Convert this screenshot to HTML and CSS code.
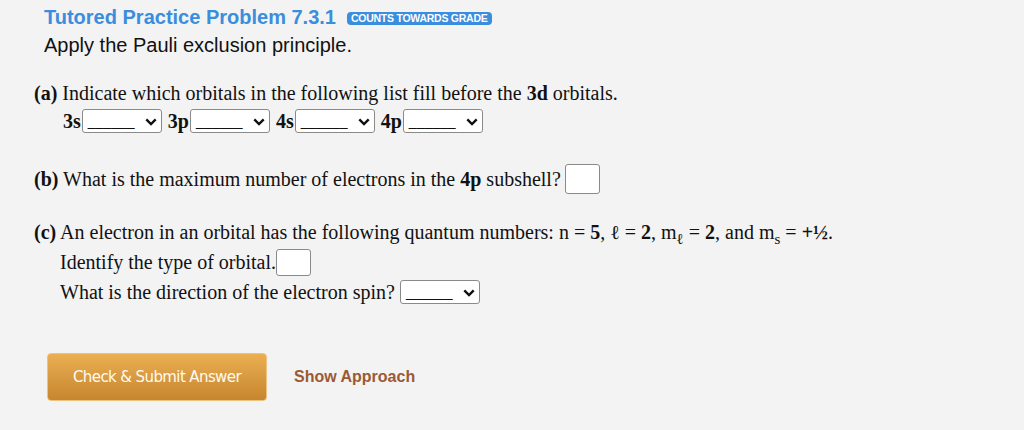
FILE: index.html
```html
<!DOCTYPE html>
<html lang="en">
<head>
<meta charset="utf-8">
<title>Tutored Practice Problem 7.3.1</title>
<link rel="stylesheet" href="styles.css">
</head>
<body>
<div class="page">
  <header class="head">
    <h1 class="title">Tutored Practice Problem 7.3.1 <span class="badge">COUNTS TOWARDS GRADE</span></h1>
    <p class="subtitle">Apply the Pauli exclusion principle.</p>
  </header>

  <section class="part part-a">
    <p class="q"><b>(a)</b> Indicate which orbitals in the following list fill before the <b>3d</b> orbitals.</p>
    <div class="sel-row">
      <b>3s</b><span class="select">______<svg class="chev" viewBox="0 0 12 8" width="12" height="8"><path d="M1.3 1.3 L6 6 L10.7 1.3" fill="none" stroke="#111" stroke-width="2.4"/></svg></span>
      <b>3p</b><span class="select">______<svg class="chev" viewBox="0 0 12 8" width="12" height="8"><path d="M1.3 1.3 L6 6 L10.7 1.3" fill="none" stroke="#111" stroke-width="2.4"/></svg></span>
      <b>4s</b><span class="select">______<svg class="chev" viewBox="0 0 12 8" width="12" height="8"><path d="M1.3 1.3 L6 6 L10.7 1.3" fill="none" stroke="#111" stroke-width="2.4"/></svg></span>
      <b>4p</b><span class="select">______<svg class="chev" viewBox="0 0 12 8" width="12" height="8"><path d="M1.3 1.3 L6 6 L10.7 1.3" fill="none" stroke="#111" stroke-width="2.4"/></svg></span>
    </div>
  </section>

  <section class="part part-b">
    <p class="q line"><span><b>(b)</b> What is the maximum number of electrons in the <b>4p</b> subshell?</span><span class="box box-b"></span></p>
  </section>

  <section class="part part-c">
    <p class="q"><b>(c)</b> An electron in an orbital has the following quantum numbers: n = <b>5</b>, ℓ = <b>2</b>, m<sub>ℓ</sub> = <b>2</b>, and m<sub>s</sub> = <b>+½</b>.</p>
    <p class="sub line"><span>Identify the type of orbital.</span><span class="box box-c"></span></p>
    <p class="sub line"><span>What is the direction of the electron spin?</span><span class="select spin">______<svg class="chev" viewBox="0 0 12 8" width="12" height="8"><path d="M1.3 1.3 L6 6 L10.7 1.3" fill="none" stroke="#111" stroke-width="2.4"/></svg></span></p>
  </section>

  <div class="actions">
    <button class="submit" type="button">Check &amp; Submit Answer</button>
    <a class="approach" href="#">Show Approach</a>
  </div>
</div>
</body>
</html>
```

FILE: styles.css
```css
html, body {
  margin: 0;
  padding: 0;
  background: #f3f3f3;
}
.page {
  padding: 5px 0 0 34px;
  color: #111;
}
.head {
  font-family: "Liberation Sans", Arial, sans-serif;
  margin-left: 10px;
}
.title {
  margin: 0;
  font-size: 20px;
  font-weight: bold;
  color: #3b8ddd;
  line-height: 24px;
  display: flex;
  align-items: center;
}
.badge {
  display: inline-block;
  margin-left: 11px;
  margin-top: 3px;
  background: #3b8ddd;
  color: #fff;
  font-size: 10.5px;
  font-weight: bold;
  line-height: 13px;
  padding: 0 4px;
  border-radius: 4px;
  letter-spacing: -0.25px;
}
.subtitle {
  margin: 4px 0 0 0;
  font-size: 20px;
  line-height: 24px;
  color: #111;
}
.part {
  font-family: "Liberation Serif", "Times New Roman", serif;
  font-size: 20px;
  color: #111;
}
.part p { margin: 0; }
.part-a { margin-top: 24px; }
.q { line-height: 24px; }
.sel-row {
  display: flex;
  align-items: center;
  margin: 3px 0 0 29px;
  height: 26px;
}
.sel-row b { margin-right: 1px; }
.select {
  display: inline-flex;
  align-items: center;
  justify-content: space-between;
  box-sizing: border-box;
  width: 80px;
  height: 24px;
  padding: 0 4px 0 5px;
  margin-right: 6px;
  background: #fff;
  border: 1px solid #8a8a8a;
  border-radius: 3px;
  font-family: "Liberation Sans", Arial, sans-serif;
  font-size: 14px;
  color: #111;
  line-height: 14px;
}
.select .chev { margin-top: 1px; }
.sel-row .select:last-child { margin-right: 0; }
.line {
  display: flex;
  align-items: center;
}
.part-b { margin-top: 30px; }
.box {
  display: inline-block;
  box-sizing: border-box;
  background: #fff;
  border: 1px solid #8a8a8a;
  border-radius: 3px;
}
.box-b { width: 35px; height: 30px; margin-left: 4px; }
.part-c { margin-top: 26px; }
.part-c .q { margin-bottom: 3px; }
.part .sub { margin-left: 26px; height: 30px; }
.box-c { width: 35px; height: 27px; margin-left: 0; }
.spin { margin-left: 5px; }
sub {
  font-size: 15px;
  vertical-align: -5px;
  line-height: 0;
}
.actions {
  display: flex;
  align-items: center;
  margin-top: 46px;
  margin-left: 13px;
}
.submit {
  box-sizing: border-box;
  width: 220px;
  height: 48px;
  border: 1px solid #ebc27f;
  border-radius: 4px;
  background: linear-gradient(#ebaf52, #c6862f);
  color: #fffaf0;
  font-family: "DejaVu Sans", Verdana, sans-serif;
  font-size: 15px;
  letter-spacing: -0.6px;
  padding: 0;
  cursor: pointer;
}
.approach {
  margin-left: 27px;
  font-family: "Liberation Sans", Arial, sans-serif;
  font-weight: bold;
  font-size: 16px;
  color: #9b5a34;
  text-decoration: none;
}
```
